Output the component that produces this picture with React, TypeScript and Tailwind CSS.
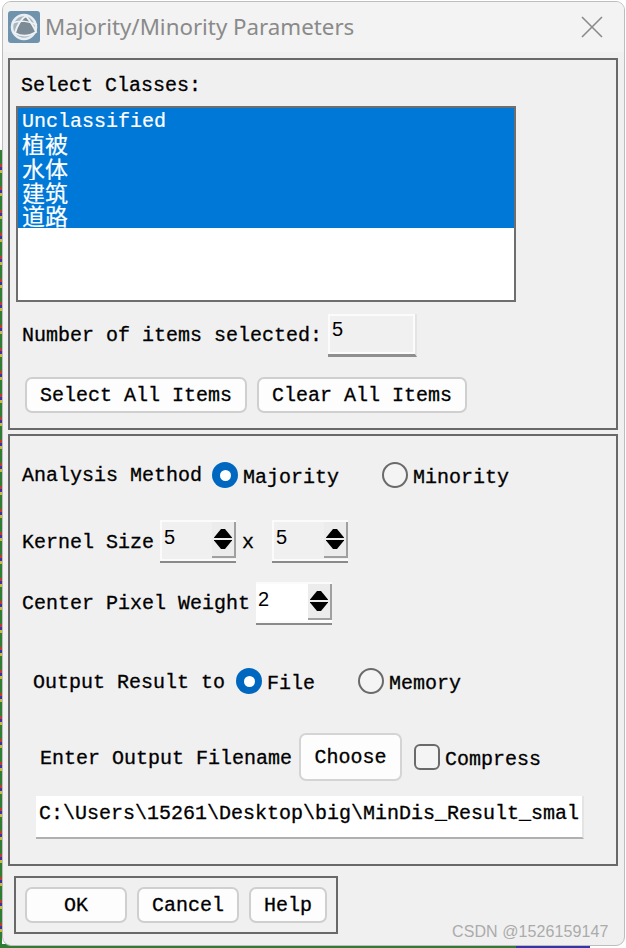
const mono = 'font-["Liberation_Mono","Noto_Sans_CJK_SC",monospace] [-webkit-text-stroke:0.3px_currentColor]';
const digit = "font-['Liberation_Sans',sans-serif] [-webkit-text-stroke:0px]";

function Btn({ label, width }: { label: string; width: string }) {
  return (
    <div className={`${width} h-[36px] pt-[2px] flex items-center justify-center rounded-[7px] border-2 border-[#cfcfcf] bg-[#fdfdfd] text-[20px] text-black`}>
      {label}
    </div>
  );
}

function Radio({ checked }: { checked?: boolean }) {
  return checked ? (
    <div className="w-[26px] h-[26px] rounded-full bg-[#0067c0] flex items-center justify-center shrink-0">
      <div className="w-[11px] h-[11px] rounded-full bg-white" />
    </div>
  ) : (
    <div className="w-[26px] h-[26px] rounded-full border-2 border-[#6a6a6a] bg-[#f4f4f4] shrink-0" />
  );
}

function SpinArrows() {
  return (
    <svg width="20" height="22" viewBox="0 0 20 22" className="block">
      <path d="M8 1 H12 L19 9.5 V10 H1 V9.5 Z" fill="#000" />
      <path d="M8 21 H12 L19 12.5 V12 H1 V12.5 Z" fill="#000" />
    </svg>
  );
}

function Spin({ value, white }: { value: string; white?: boolean }) {
  return (
    <div className="w-[76px] h-[43px] border-b-2 border-b-[#8a8a8a]">
      <div className={`h-full flex border-t-2 border-b-2 border-[#fbfbfb] ${white ? 'bg-white' : 'bg-[#f0f0f0] border-l-2'}`}>
        <div className={`flex-1 pl-[2px] text-[20px] leading-[30px] ${digit}`}>{value}</div>
        <div className="w-[24px] h-[36px] bg-[#ececec] border-r-2 border-b-2 border-[#a0a0a0] flex items-center justify-center">
          <SpinArrows />
        </div>
      </div>
    </div>
  );
}

function Row({ children }: { children: React.ReactNode }) {
  return <div className="h-[24px] leading-[24px] whitespace-nowrap overflow-hidden pl-[4px] [-webkit-text-stroke:0.2px_white]">{children}</div>;
}

export default function App() {
  return (
    <div className={`relative w-[626px] h-[948px] bg-white overflow-hidden ${mono} text-[20px] text-black`}>
      {/* bits of the image behind the dialog */}
      <div className="absolute left-0 top-[150px] bottom-0 w-[2px] bg-[repeating-linear-gradient(180deg,#2e7d32_0,#2e7d32_14px,#c0392b_14px,#c0392b_17px,#3333aa_17px,#3333aa_20px,#c9b83a_20px,#c9b83a_23px)]" />
      <div className="absolute left-0 right-[36px] bottom-0 h-[4px] bg-[#2e7d32]" />
      <div className="absolute left-[516px] w-[74px] bottom-0 h-[4px] bg-[#3333aa]" />

      <div className="absolute left-[2px] top-[1px] w-[623px] h-[945px] rounded-[9px] border border-[#bdbdbd] bg-[#f0f0f0] overflow-hidden">
        <div className="h-[50px] bg-[#f3f3f3] flex items-center pl-[5px] pr-[21px]">
          <svg width="32" height="32" viewBox="0 0 32 32" className="shrink-0">
            <rect x="0" y="0" width="32" height="32" rx="3" fill="#6f93ad" />
            <circle cx="16" cy="16" r="12" fill="#a9b6bf" stroke="#e8eef2" strokeWidth="2.5" />
            <path d="M7 22 C10 12 13 8 18 5 C22 10 26 16 28 21 C20 26 12 25 7 22 Z" fill="#7d8b97" stroke="#eef2f5" strokeWidth="2" />
            <path d="M4 12 C12 9 22 10 29 14" fill="none" stroke="#eef2f5" strokeWidth="1.5" />
          </svg>
          <span className="ml-[5px] text-[22.3px] text-[#8a8a8a] font-['Noto_Sans',sans-serif] [-webkit-text-stroke:0px] whitespace-nowrap">Majority/Minority Parameters</span>
          <svg width="22" height="22" viewBox="0 0 22 22" className="ml-auto">
            <path d="M1 1 L21 21 M21 1 L1 21" stroke="#8a8a8a" strokeWidth="1.6" />
          </svg>
        </div>

        <div className="px-[5px] pt-[6px]">
          <div className="w-[610px] h-[372px] border-2 border-[#696969] pt-[12px]">
            <div className="pl-[11px] h-[24px] leading-[28px]">Select Classes:</div>
            <div className="ml-[6px] mt-[10px] w-[500px] h-[196px] border-2 border-[#6e6e6e] bg-white">
              <div className="h-[120px] bg-[#0078d7] text-white overflow-hidden">
                <Row><span className="relative top-[2px]">Unclassified</span></Row>
                <Row><span className="relative top-[3px] text-[23px]">植被</span></Row>
                <Row><span className="relative top-[4px] text-[23px]">水体</span></Row>
                <Row><span className="relative top-[4px] text-[23px]">建筑</span></Row>
                <Row><span className="relative top-[3px] text-[23px]">道路</span></Row>
              </div>
            </div>
            <div className="flex items-center mt-[12px] ml-[12px]">
              <span className="w-[306px]">Number of items selected:</span>
              <div className="w-[89px] h-[43px] border-b-[3px] border-b-[#8f8f8f] border-r-2 border-r-[#e4e4e4]">
                <div className={`h-full bg-[#f0f0f0] border-2 border-[#fbfbfb] pl-[2px] text-[20px] leading-[26px] ${digit}`}>5</div>
              </div>
            </div>
            <div className="flex gap-[10px] mt-[20px] ml-[15px]">
              <Btn label="Select All Items" width="w-[222px]" />
              <Btn label="Clear All Items" width="w-[210px]" />
            </div>
          </div>

          <div className="w-[610px] mt-[4px] h-[432px] border-2 border-[#696969] pt-[26px]">
            <div className="flex items-center h-[26px] ml-[12px]">
              <span className="w-[190px] pt-[2px] whitespace-nowrap">Analysis Method</span>
              <Radio checked />
              <span className="ml-[5px] pt-[6px] w-[139px]">Majority</span>
              <Radio />
              <span className="ml-[5px] pt-[6px]">Minority</span>
            </div>
            <div className="flex items-center mt-[32px] ml-[12px]">
              <span className="w-[138px] pt-[2px] whitespace-nowrap">Kernel Size</span>
              <Spin value="5" />
              <span className="w-[36px] pl-[6px] pt-[2px]">x</span>
              <Spin value="5" />
            </div>
            <div className="flex items-center mt-[19px] ml-[12px]">
              <span className="w-[234px] whitespace-nowrap">Center Pixel Weight</span>
              <Spin value="2" white />
            </div>
            <div className="flex items-center h-[26px] mt-[43px] ml-[23px]">
              <span className="w-[203px] pt-[4px] whitespace-nowrap">Output Result to</span>
              <Radio checked />
              <span className="ml-[5px] pt-[6px] w-[91px]">File</span>
              <Radio />
              <span className="ml-[5px] pt-[6px]">Memory</span>
            </div>
            <div className="flex items-center mt-[39px] ml-[30px]">
              <span className="w-[259px] pt-[4px] whitespace-nowrap">Enter Output Filename</span>
              <div className="w-[103px] h-[48px] pt-[2px] flex items-center justify-center rounded-[7px] border-2 border-[#d4d4d4] bg-[#fdfdfd]">Choose</div>
              <div className="ml-[12px] w-[26px] h-[26px] rounded-[6px] border-2 border-[#6a6a6a] bg-[#f4f4f4]" />
              <span className="ml-[5px] pt-[6px]">Compress</span>
            </div>
            <div className="mt-[15px] ml-[26px] w-[548px] h-[43px] bg-white border-b-2 border-b-[#b0b0b0] border-r-2 border-r-[#e4e4e4] pl-[3px] leading-[36px] whitespace-nowrap overflow-hidden">
              C:\Users\15261\Desktop\big\MinDis_Result_smal
            </div>
          </div>

          <div className="mt-[10px] ml-[6px] w-[324px] h-[58px] border-2 border-[#696969] flex items-center gap-[10px] pl-[9px]">
            <Btn label="OK" width="w-[102px]" />
            <Btn label="Cancel" width="w-[102px]" />
            <Btn label="Help" width="w-[78px]" />
          </div>
        </div>
      </div>

      <div className="absolute left-[452px] top-[922px] text-[16px] leading-[20px] tracking-[0.1px] text-[#ababab] font-['Liberation_Sans',sans-serif] [-webkit-text-stroke:0px] whitespace-nowrap">
        CSDN @1526159147
      </div>
    </div>
  );
}
